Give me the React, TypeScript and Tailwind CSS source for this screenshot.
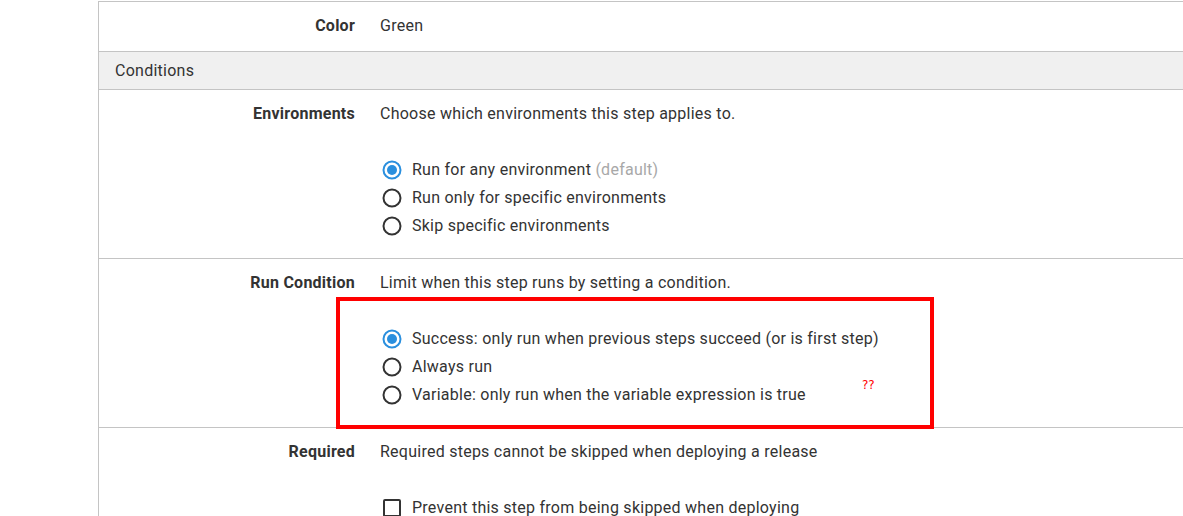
import React from 'react'

const font = { fontFamily: 'Roboto, "Liberation Sans", sans-serif' }

function RadioIcon({ checked }: { checked?: boolean }) {
  return (
    <svg width="24" height="24" viewBox="0 0 24 24" className="shrink-0">
      <circle cx="12" cy="12" r="8.5" fill="none" stroke={checked ? '#2a8fde' : '#333333'} strokeWidth="2" />
      {checked && <circle cx="12" cy="12" r="5" fill="#2a8fde" />}
    </svg>
  )
}

function CheckboxIcon() {
  return (
    <svg width="24" height="24" viewBox="0 0 24 24" className="shrink-0">
      <rect x="4" y="4" width="16" height="16" rx="1" fill="none" stroke="#333333" strokeWidth="2" />
    </svg>
  )
}

function Radio({ label, checked, hint }: { label: string; checked?: boolean; hint?: string }) {
  return (
    <div className="flex items-center gap-2 h-[28px]">
      <RadioIcon checked={checked} />
      <span>
        {label}
        {hint && <span className="text-[#a8a8a8]"> {hint}</span>}
      </span>
    </div>
  )
}

function Row({ label, children, last }: { label: string; children: React.ReactNode; last?: boolean }) {
  return (
    <div className={`flex ${last ? '' : 'border-b border-[#c4c4c4]'}`}>
      <div className="w-[256px] shrink-0 text-right font-bold pt-[12px] leading-6">{label}</div>
      <div className="pl-[25px] pt-[12px] pb-[18px] leading-6">{children}</div>
    </div>
  )
}

export default function App() {
  return (
    <div className="relative w-[1183px] h-[516px] overflow-hidden bg-white text-[16px] tracking-[0.25px] text-[#333333]" style={font}>
      <div className="ml-[98px] mt-px border-l border-t border-[#c4c4c4]">
        <div className="flex border-b border-[#c4c4c4]">
          <div className="w-[256px] shrink-0 text-right font-bold pt-[12px] pb-[13px] leading-6">Color</div>
          <div className="pl-[25px] pt-[12px] pb-[13px] leading-6">Green</div>
        </div>

        <div className="bg-[#f0f0f0] border-b border-[#c4c4c4] px-4 h-[38px] flex items-center">Conditions</div>

        <Row label="Environments">
          <div>Choose which environments this step applies to.</div>
          <div className="mt-[30px]">
            <Radio label="Run for any environment" hint="(default)" checked />
            <Radio label="Run only for specific environments" />
            <Radio label="Skip specific environments" />
          </div>
        </Row>

        <Row label="Run Condition">
          <div>Limit when this step runs by setting a condition.</div>
          <div className="mt-[30px]">
            <Radio label="Success: only run when previous steps succeed (or is first step)" checked />
            <Radio label="Always run" />
            <Radio label="Variable: only run when the variable expression is true" />
          </div>
        </Row>

        <Row label="Required" last>
          <div>Required steps cannot be skipped when deploying a release</div>
          <div className="mt-[30px] flex items-center gap-2 h-[28px]">
            <CheckboxIcon />
            <span>Prevent this step from being skipped when deploying</span>
          </div>
        </Row>
      </div>

      <div className="absolute left-[336px] top-[297px] w-[598px] h-[132px] border-4 border-[#ff0000]" />
      <div className="absolute left-[862px] top-[377px] text-[12px] leading-4 tracking-normal text-[#ff0000]" style={{ fontFamily: '"DejaVu Sans", sans-serif' }}>??</div>
    </div>
  )
}
